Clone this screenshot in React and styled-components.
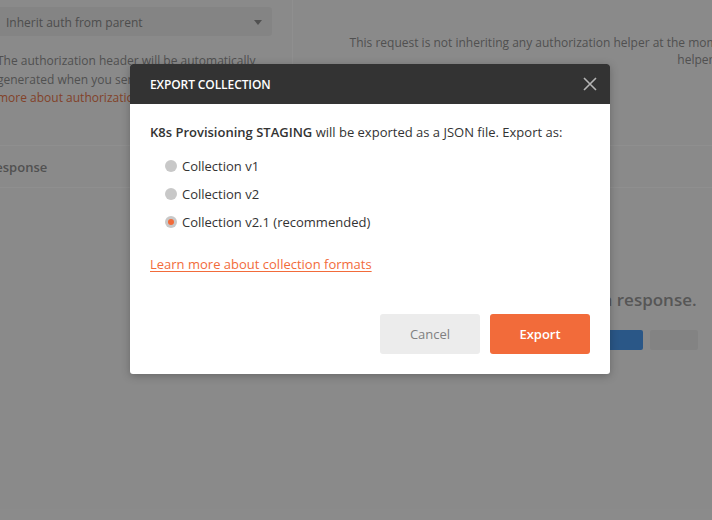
import styled, { createGlobalStyle } from "styled-components";

const GlobalStyle = createGlobalStyle`
  html, body {
    margin: 0;
    padding: 0;
    width: 712px;
    height: 520px;
    overflow: hidden;
    font-family: "Open Sans", "Liberation Sans", sans-serif;
  }
`;

const Page = styled.div`
  width: 712px;
  height: 520px;
  background: #f7f7f7;
  overflow: hidden;
  position: relative;
`;

const Shifted = styled.div`
  margin-left: -13px;
  width: 1200px;
`;

const TopSection = styled.div`
  display: flex;
  height: 146px;
  border-bottom: 1px solid #ffffff;
  box-sizing: border-box;
`;

const LeftPanel = styled.div`
  width: 306px;
  flex-shrink: 0;
  padding: 7px 20px 0 10px;
  box-sizing: border-box;
  border-right: 1px solid #ffffff;
`;

const Dropdown = styled.div`
  height: 29px;
  width: 275px;
  background: #ececec;
  border-radius: 3px;
  display: flex;
  align-items: center;
  justify-content: space-between;
  padding: 1px 10px 0 9px;
  box-sizing: border-box;
  font-size: 12px;
  color: #8a8a8a;
`;

const Caret = styled.span`
  width: 0;
  height: 0;
  border-left: 4px solid transparent;
  border-right: 4px solid transparent;
  border-top: 5px solid #909090;
`;

const HelpText = styled.p`
  margin: 16px 0 0;
  font-size: 12px;
  line-height: 18.5px;
  color: #8f8f8f;
`;

const HelpLink = styled.span`
  color: #e8764a;
`;

const RightPanel = styled.div`
  width: 808px;
  flex-shrink: 0;
  padding-top: 34px;
  text-align: center;
  font-size: 12px;
  line-height: 17px;
  color: #8f8f8f;
`;

const ResponseBar = styled.div`
  height: 42px;
  border-bottom: 1px solid #ffffff;
  box-sizing: border-box;
  display: flex;
  align-items: center;
  padding-left: 0;
  font-size: 13px;
  font-weight: 600;
  color: #909090;
`;

const EmptyState = styled.div`
  padding: 100px 0 0 490px;
  display: flex;
  flex-direction: column;
`;

const EmptyTitle = styled.div`
  font-size: 17px;
  font-weight: 600;
  color: #9a9a9a;
  line-height: 24px;
`;

const GhostRow = styled.div`
  display: flex;
  gap: 7px;
  margin: 18px 0 0 113px;
`;

const GhostButton = styled.div`
  height: 20px;
  width: ${(p) => p.$w}px;
  border-radius: 2px;
  background: ${(p) => (p.$primary ? "#4c9bf0" : "#e9e9e9")};
`;

const Overlay = styled.div`
  position: absolute;
  inset: 0;
  background: rgba(0, 0, 0, 0.44);
  padding: 64px 0 0 130px;
  box-sizing: border-box;
`;

const Modal = styled.div`
  width: 480px;
  height: 310px;
  background: #ffffff;
  border-radius: 3px;
  overflow: hidden;
  box-shadow: 0 2px 8px rgba(0, 0, 0, 0.25);
  display: flex;
  flex-direction: column;
`;

const ModalHeader = styled.div`
  height: 40px;
  background: #333333;
  display: flex;
  align-items: center;
  justify-content: space-between;
  padding: 0 13px 0 20px;
  flex-shrink: 0;
`;

const ModalTitle = styled.div`
  color: #ffffff;
  font-size: 12px;
  font-weight: 600;
  letter-spacing: -0.1px;
`;

const CloseIcon = styled.svg`
  width: 14px;
  height: 14px;
`;

const ModalBody = styled.div`
  flex: 1;
  padding: 19px 20px 20px;
  display: flex;
  flex-direction: column;
  font-size: 13px;
  color: #333333;
`;

const Intro = styled.div`
  line-height: 18px;
  b {
    font-weight: 600;
  }
`;

const RadioGroup = styled.div`
  display: flex;
  flex-direction: column;
  gap: 8px;
  margin-top: 15px;
  padding-left: 15px;
`;

const RadioRow = styled.label`
  display: flex;
  align-items: center;
  gap: 5px;
  height: 20px;
  line-height: 20px;
`;

const RadioDot = styled.span`
  width: 12px;
  height: 12px;
  border-radius: 50%;
  background: #c8c8c8;
  display: flex;
  align-items: center;
  justify-content: center;
  &::after {
    content: "";
    width: 6px;
    height: 6px;
    border-radius: 50%;
    background: ${(p) => (p.$checked ? "#f26b3a" : "transparent")};
  }
`;

const FormatLink = styled.a`
  margin-top: 23px;
  color: #f26b3a;
  text-decoration: underline;
  text-underline-offset: 2px;
  line-height: 18px;
  align-self: flex-start;
`;

const Footer = styled.div`
  margin-top: auto;
  display: flex;
  justify-content: flex-end;
  gap: 10px;
`;

const Button = styled.button`
  width: 100px;
  height: 40px;
  border: none;
  border-radius: 3px;
  padding: 0 0 1px;
  font-family: inherit;
  font-size: 13px;
  font-weight: ${(p) => (p.$primary ? 600 : 400)};
  background: ${(p) => (p.$primary ? "#f26b3a" : "#ececec")};
  color: ${(p) => (p.$primary ? "#ffffff" : "#808080")};
  cursor: pointer;
`;

const formats = [
  { label: "Collection v1", checked: false },
  { label: "Collection v2", checked: false },
  { label: "Collection v2.1 (recommended)", checked: true },
];

export default function App() {
  return (
    <Page>
      <GlobalStyle />
      <Shifted>
        <TopSection>
          <LeftPanel>
            <Dropdown>
              Inherit auth from parent
              <Caret />
            </Dropdown>
            <HelpText>
              The authorization header will be automatically
              <br />
              generated when you send the request. <HelpLink>Learn</HelpLink>
              <br />
              <HelpLink>more about authorization</HelpLink>
            </HelpText>
          </LeftPanel>
          <RightPanel>
            This request is not inheriting any authorization helper at the moment. Save it in a collection to use the parent's authorization
            <br />
            helper.
          </RightPanel>
        </TopSection>
        <ResponseBar>Response</ResponseBar>
        <EmptyState>
          <EmptyTitle>Hit Send to get a response.</EmptyTitle>
          <GhostRow>
            <GhostButton $primary $w={53} />
            <GhostButton $w={48} />
          </GhostRow>
        </EmptyState>
      </Shifted>

      <Overlay>
        <Modal>
          <ModalHeader>
            <ModalTitle>EXPORT COLLECTION</ModalTitle>
            <CloseIcon viewBox="0 0 14 14">
              <path d="M1 1 L13 13 M13 1 L1 13" stroke="#b5b5b5" strokeWidth="1.6" fill="none" />
            </CloseIcon>
          </ModalHeader>
          <ModalBody>
            <Intro>
              <b>K8s Provisioning STAGING</b> will be exported as a JSON file. Export as:
            </Intro>
            <RadioGroup>
              {formats.map((f) => (
                <RadioRow key={f.label}>
                  <RadioDot $checked={f.checked} />
                  {f.label}
                </RadioRow>
              ))}
            </RadioGroup>
            <FormatLink>Learn more about collection formats</FormatLink>
            <Footer>
              <Button>Cancel</Button>
              <Button $primary>Export</Button>
            </Footer>
          </ModalBody>
        </Modal>
      </Overlay>
    </Page>
  );
}
